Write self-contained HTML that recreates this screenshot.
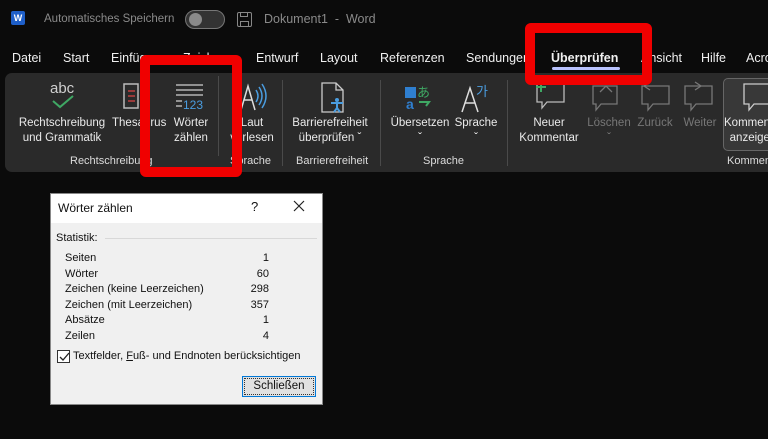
<!DOCTYPE html>
<html><head><meta charset="utf-8"><style>
*{margin:0;padding:0;box-sizing:border-box}
body{width:768px;height:439px;background:#0b0b0b;position:relative;overflow:hidden;font-family:"Liberation Sans",sans-serif;color:#e8e8e8}
.a{position:absolute;white-space:nowrap}
.t{font-size:12.5px;color:#f0f0f0;top:51px}
.lbl{font-size:11.5px;color:#eaeaea;text-align:center;line-height:15px}
.grp{font-size:11px;color:#dcdcdc;top:155px}
.sep{position:absolute;width:1px;background:#4a4a4a;top:80px;height:86px}
.red{position:absolute;border:10px solid #f00000;border-radius:6px}
.dis{color:#7a7a7a}
.d{font-size:11px;color:#111}
</style></head><body>
<div class="a" style="left:11px;top:11px;width:14px;height:14px;background:#1e5fc9;border-radius:2px;color:#fff;font-size:9px;font-weight:bold;text-align:center;line-height:14px">W</div>
<div class="a" style="left:44px;top:13px;font-size:11.5px;color:#8a8a8a">Automatisches Speichern</div>
<div class="a" style="left:185px;top:10px;width:40px;height:19px;border:1px solid #777;border-radius:10px;background:#333"></div>
<div class="a" style="left:189px;top:13px;width:13px;height:13px;border-radius:50%;background:#8a8a8a"></div>
<div class="a" style="left:237px;top:12px;width:15px;height:15px;border:1.5px solid #888;border-radius:2px"></div>
<div class="a" style="left:240px;top:12px;width:8px;height:5px;border:1px solid #888;border-top:none"></div>
<div class="a" style="left:240px;top:21px;width:9px;height:5px;border:1px solid #888;border-bottom:none"></div>
<div class="a" style="left:264px;top:12px;font-size:12.5px;color:#8a8a8a">Dokument1 &nbsp;- &nbsp;Word</div>
<div class="a t" style="left:12px">Datei</div>
<div class="a t" style="left:63px">Start</div>
<div class="a t" style="left:111px">Einfügen</div>
<div class="a t" style="left:183px">Zeichnen</div>
<div class="a t" style="left:256px">Entwurf</div>
<div class="a t" style="left:320px">Layout</div>
<div class="a t" style="left:380px">Referenzen</div>
<div class="a t" style="left:466px">Sendungen</div>
<div class="a t" style="left:551px;font-weight:bold">Überprüfen</div>
<div class="a" style="left:552px;top:67px;width:68px;height:3px;background:#b9c3ff;border-radius:2px"></div>
<div class="a t" style="left:641px">Ansicht</div>
<div class="a t" style="left:701px">Hilfe</div>
<div class="a t" style="left:746px">Acrobat</div>
<div class="a" style="left:5px;top:73px;width:780px;height:99px;background:#2a2a2a;border-radius:7px"></div>
<div class="a" style="left:50px;top:80px;font-size:15px;color:#cfcfcf">abc</div>
<svg class="a" style="left:51px;top:95px" width="24" height="14"><path d="M2 6 L9 12 L22 1" stroke="#3fa864" stroke-width="2" fill="none"/></svg>
<svg class="a" style="left:122px;top:82px" width="30" height="30"><rect x="2" y="2" width="14" height="24" fill="none" stroke="#bbb" stroke-width="1.5"/><path d="M6 9h7M6 14h7M6 19h7" stroke="#d44" stroke-width="1.3"/><path d="M20 3v20" stroke="#bbb" stroke-width="1.5"/></svg>
<svg class="a" style="left:174px;top:83px" width="34" height="28"><path d="M2 2h27M2 7h27M2 12h27M2 18h6M2 23h6" stroke="#d0d0d0" stroke-width="1.2"/><text x="9" y="26" font-family="Liberation Sans" font-size="12" fill="#4a9de0">123</text></svg>
<svg class="a" style="left:238px;top:82px" width="30" height="30"><path d="M3 28 L10 4 L17 28 M6 18h8" stroke="#ddd" stroke-width="1.5" fill="none"/><path d="M18 8q4 6 0 12M21 5q6 9 0 18M24 2q8 12 0 24" stroke="#4a9de0" stroke-width="1.5" fill="none"/></svg>
<svg class="a" style="left:320px;top:82px" width="28" height="32"><path d="M2 1h14l7 7v22H2z M16 1v7h7" fill="none" stroke="#ccc" stroke-width="1.3"/><circle cx="17" cy="18" r="2" fill="#4a9de0"/><path d="M11 21h12M17 21v5l-3 4M17 26l3 4" stroke="#4a9de0" stroke-width="2" fill="none"/></svg>
<svg class="a" style="left:404px;top:82px" width="30" height="30"><rect x="1" y="5" width="11" height="11" fill="#2f7fd0"/><text x="2" y="27" font-family="Liberation Sans" font-size="14" font-weight="bold" fill="#2f7fd0">a</text><text x="13" y="15" font-family="Noto Sans CJK JP" font-size="13" fill="#3fa864">あ</text><path d="M15 20h10l-3 4" stroke="#3fa864" stroke-width="2" fill="none"/></svg>
<svg class="a" style="left:459px;top:82px" width="34" height="32"><path d="M3 30 L11 6 L19 30 M6 21h10" stroke="#ddd" stroke-width="1.5" fill="none"/><text x="17" y="14" font-family="Noto Sans CJK KR" font-size="13" fill="#4a9de0">가</text></svg>
<svg class="a" style="left:535px;top:80px" width="230" height="32">
<g fill="none" stroke="#bbb" stroke-width="1.3"><path d="M2 2h27v20H12l-5 6v-6H2z"/></g>
<path d="M6 2v10M1 7h10" stroke="#3fa864" stroke-width="2"/>
<g fill="none" stroke="#777" stroke-width="1.3"><path d="M58 6h24v18H66l-5 6v-6h-3z"/><path d="M65 12l6-6 6 6"/><path d="M107 6h27v18H118l-5 6v-6h-6z"/><path d="M115 10l-6 -4 6-4"/><path d="M150 6h27v18H161l-5 6v-6h-6z"/><path d="M160 2l6 4-6 4"/></g>
</svg>
<div class="a" style="left:723px;top:78px;width:60px;height:73px;border:1px solid #666;border-radius:5px;background:#383838"></div>
<svg class="a" style="left:742px;top:82px" width="30" height="30"><path d="M2 2h27v20H12l-5 6v-6H2z" fill="none" stroke="#ccc" stroke-width="1.3"/></svg>
<div class="a lbl" style="left:12px;top:116px;width:100px">Rechtschreibung<br>und Grammatik</div>
<div class="a lbl" style="left:112px;top:116px;width:50px">Thesaurus</div>
<div class="a lbl" style="left:167px;top:116px;width:48px">Wörter<br>zählen</div>
<div class="a" style="left:218px;top:76px;width:1px;height:80px;background:#4a4a4a"></div>
<div class="a lbl" style="left:228px;top:116px;width:48px">Laut<br>vorlesen</div>
<div class="sep" style="left:282px"></div>
<div class="a lbl" style="left:288px;top:116px;width:84px">Barrierefreiheit<br>überprüfen ˇ</div>
<div class="sep" style="left:380px"></div>
<div class="a lbl" style="left:388px;top:116px;width:64px">Übersetzen<br>ˇ</div>
<div class="a lbl" style="left:451px;top:116px;width:50px">Sprache<br>ˇ</div>
<div class="sep" style="left:507px"></div>
<div class="a lbl" style="left:514px;top:116px;width:70px">Neuer<br>Kommentar</div>
<div class="a lbl dis" style="left:585px;top:116px;width:48px;color:#777">Löschen<br>ˇ</div>
<div class="a lbl" style="left:634px;top:116px;width:42px;color:#777">Zurück</div>
<div class="a lbl" style="left:680px;top:116px;width:40px;color:#777">Weiter</div>
<div class="a lbl" style="left:724px;top:116px;width:58px">Kommentare<br>anzeigen</div>
<div class="a grp" style="left:70px">Rechtschreibung</div>
<div class="a grp" style="left:230px">Sprache</div>
<div class="a grp" style="left:296px">Barrierefreiheit</div>
<div class="a grp" style="left:423px">Sprache</div>
<div class="a grp" style="left:727px">Kommentare</div>
<div class="red" style="left:140px;top:55px;width:102px;height:122px"></div>
<div class="red" style="left:525px;top:23px;width:127px;height:62px"></div>
<div class="a" style="left:50px;top:193px;width:273px;height:212px;background:#f0f0f0;border:1px solid #888"></div>
<div class="a" style="left:51px;top:194px;width:271px;height:29px;background:#fff"></div>
<div class="a d" style="left:58px;top:201px;font-size:12px">Wörter zählen</div>
<div class="a d" style="left:251px;top:199px;font-size:13px">?</div>
<svg class="a" style="left:293px;top:200px" width="12" height="12"><path d="M1 1l10 10M11 1L1 11" stroke="#222" stroke-width="1.2"/></svg>
<div class="a d" style="left:56px;top:232px">Statistik:</div>
<div class="a" style="left:105px;top:238px;width:212px;height:1px;background:#d8d8d8"></div>
<div class="a d" style="left:65px;top:251px;line-height:15.5px">Seiten<br>Wörter<br>Zeichen (keine Leerzeichen)<br>Zeichen (mit Leerzeichen)<br>Absätze<br>Zeilen</div>
<div class="a d" style="left:240px;top:251px;width:29px;text-align:right;line-height:15.5px">1<br>60<br>298<br>357<br>1<br>4</div>
<div class="a" style="left:57px;top:350px;width:13px;height:13px;border:1px solid #333;background:#fff"></div>
<svg class="a" style="left:58px;top:351px" width="12" height="12"><path d="M2 6l3 3 6-7" stroke="#222" stroke-width="1.3" fill="none"/></svg>
<div class="a d" style="left:73px;top:350px">Textfelder, <u>F</u>uß- und Endnoten berücksichtigen</div>
<div class="a" style="left:242px;top:376px;width:74px;height:21px;border:1px solid #0078d7;background:#e1e1e1"></div>
<div class="a d" style="left:244px;top:378px;width:70px;height:17px;border:1px dotted #333;text-align:center;line-height:15px;font-size:11.5px">Schließen</div>
</body></html>
